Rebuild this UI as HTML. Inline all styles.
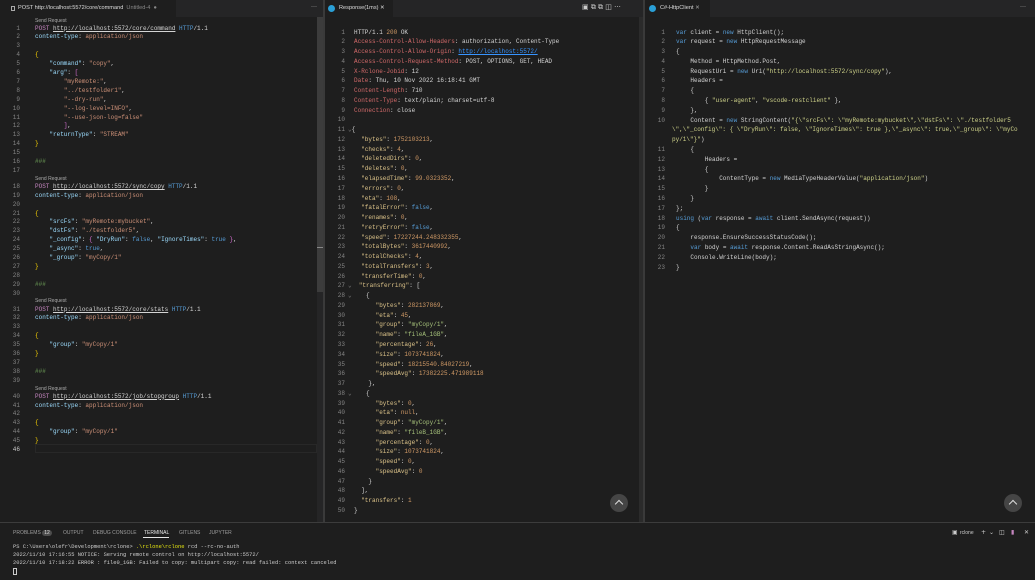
<!DOCTYPE html>
<html><head><meta charset="utf-8"><style>
*{margin:0;padding:0;box-sizing:border-box}
body{width:1035px;height:580px;background:#1e1e1e;overflow:hidden;position:relative;font-family:"Liberation Mono",monospace;font-size:6px;color:#d4d4d4}
.abs{position:absolute}
.tabbar{position:absolute;top:0;height:17px;background:#252526}
.tab{position:absolute;top:0;height:17px;background:#1e1e1e;font-family:"Liberation Sans",sans-serif;font-size:5.6px;color:#ddd;line-height:17px;white-space:nowrap}
.code{position:absolute;white-space:normal}
.code div{position:relative;white-space:pre;overflow:visible}
.L div{height:8.9px}.M div{height:9.78px}.R div{height:9.8px}.T div{height:7.9px}
.ln{position:absolute;left:0;text-align:right;color:#858585;width:20px}
.code div.sr{font-family:"Liberation Sans",sans-serif;font-size:5px;color:#aaa;height:7.1px;line-height:7px;padding-left:35px}
.k{color:#c586c0}.u{text-decoration:underline}.b{color:#569cd6}.h{color:#9cdcfe}.s{color:#ce9178}.y{color:#ffd700}.p{color:#da70d6}.g{color:#6a9955}
.rh{color:#d16969}.rk{color:#dcc389}.rn{color:#d19a66}.rs{color:#a5c07a}.lk{color:#3794ff;text-decoration:underline}
.cs{color:#cfd38a}.cv{color:#569cd6}
.circ{position:absolute;width:18px;height:18px;border-radius:50%;background:#454545}
.circ:after{content:"";position:absolute;left:6px;top:7px;width:5px;height:5px;border-left:1px solid #ddd;border-top:1px solid #ddd;transform:rotate(45deg)}
.pt{position:absolute;top:530px;font-family:"Liberation Sans",sans-serif;font-size:5px;color:#9d9d9d}
.ti{position:absolute;top:529px;font-family:"DejaVu Sans",sans-serif;font-size:6px;color:#ccc}
</style></head><body>
<div class="tabbar" style="left:0;width:323px"></div>
<div class="tabbar" style="left:325px;width:318px"></div>
<div class="tabbar" style="left:645px;width:390px"></div>
<div class="tab" style="left:0;width:176px;padding-left:18px">POST http://localhost:5572/core/command <span style="color:#888">&nbsp;Untitled-4&nbsp; ●</span></div>
<div class="abs" style="left:11px;top:6px;width:4px;height:5px;border:1px solid #aaa"></div>
<div class="abs" style="left:311px;top:4px;color:#ccc;font-family:'Liberation Sans'">···</div>
<div class="tab" style="left:325px;width:68px;padding-left:14px">Response(1ms) <span style="color:#ddd">✕</span></div>
<div class="abs" style="left:328px;top:5px;width:7px;height:7px;border-radius:50%;background:#2a9fd6"></div>
<div class="abs" style="left:582px;top:3px;color:#ccc;font-size:7px;font-family:'DejaVu Sans'">▣ ⧉ ⧉ ◫ ···</div>
<div class="tab" style="left:645px;width:65px;padding-left:15px">C#-HttpClient <span style="color:#aaa">✕</span></div>
<div class="abs" style="left:649px;top:5px;width:7px;height:7px;border-radius:50%;background:#2a9fd6"></div>
<div class="abs" style="left:1020px;top:4px;color:#ccc;font-family:'Liberation Sans'">···</div>

<div class="abs" style="left:323px;top:0;width:2px;height:522px;background:#3a3a3a"></div>
<div class="abs" style="left:643px;top:0;width:2px;height:522px;background:#3a3a3a"></div>
<div class="abs" style="left:317px;top:17px;width:6px;height:505px;background:#252526"></div>
<div class="abs" style="left:317px;top:17px;width:6px;height:275px;background:#3c3c3c"></div>
<div class="abs" style="left:317px;top:247px;width:6px;height:1px;background:#888"></div>
<div class="abs" style="left:639px;top:17px;width:4px;height:505px;background:#2b2b2b"></div>
<div class="abs" style="left:35px;top:444px;width:282px;height:9px;border:1px solid #282828"></div>

<!-- LEFT -->
<div class="code L" style="left:0;top:17.5px;line-height:8.9px">
<div class="sr">Send Request</div>
<div><span class="ln">1</span><span style="padding-left:35px"><span class="k">POST</span> <span class="u">http://localhost:5572/core/command</span> <span class="b">HTTP</span>/1.1</span></div>
<div><span class="ln">2</span><span style="padding-left:35px"><span class="h">content-type</span>: <span class="s">application/json</span></span></div>
<div><span class="ln">3</span> </div>
<div><span class="ln">4</span><span style="padding-left:35px" class="y">{</span></div>
<div><span class="ln">5</span><span style="padding-left:35px">    <span class="h">"command"</span>: <span class="s">"copy"</span>,</span></div>
<div><span class="ln">6</span><span style="padding-left:35px">    <span class="h">"arg"</span>: <span class="p">[</span></span></div>
<div><span class="ln">7</span><span style="padding-left:35px">        <span class="s">"myRemote:"</span>,</span></div>
<div><span class="ln">8</span><span style="padding-left:35px">        <span class="s">"../testfolder1"</span>,</span></div>
<div><span class="ln">9</span><span style="padding-left:35px">        <span class="s">"--dry-run"</span>,</span></div>
<div><span class="ln">10</span><span style="padding-left:35px">        <span class="s">"--log-level=INFO"</span>,</span></div>
<div><span class="ln">11</span><span style="padding-left:35px">        <span class="s">"--use-json-log=false"</span></span></div>
<div><span class="ln">12</span><span style="padding-left:35px">        <span class="p">]</span>,</span></div>
<div><span class="ln">13</span><span style="padding-left:35px">    <span class="h">"returnType"</span>: <span class="s">"STREAM"</span></span></div>
<div><span class="ln">14</span><span style="padding-left:35px" class="y">}</span></div>
<div><span class="ln">15</span> </div>
<div><span class="ln">16</span><span style="padding-left:35px" class="g">###</span></div>
<div><span class="ln">17</span> </div>
<div class="sr">Send Request</div>
<div><span class="ln">18</span><span style="padding-left:35px"><span class="k">POST</span> <span class="u">http://localhost:5572/sync/copy</span> <span class="b">HTTP</span>/1.1</span></div>
<div><span class="ln">19</span><span style="padding-left:35px"><span class="h">content-type</span>: <span class="s">application/json</span></span></div>
<div><span class="ln">20</span> </div>
<div><span class="ln">21</span><span style="padding-left:35px" class="y">{</span></div>
<div><span class="ln">22</span><span style="padding-left:35px">    <span class="h">"srcFs"</span>: <span class="s">"myRemote:mybucket"</span>,</span></div>
<div><span class="ln">23</span><span style="padding-left:35px">    <span class="h">"dstFs"</span>: <span class="s">"./testfolder5"</span>,</span></div>
<div><span class="ln">24</span><span style="padding-left:35px">    <span class="h">"_config"</span>: <span class="p">{</span> <span class="h">"DryRun"</span>: <span class="b">false</span>, <span class="h">"IgnoreTimes"</span>: <span class="b">true</span> <span class="p">}</span>,</span></div>
<div><span class="ln">25</span><span style="padding-left:35px">    <span class="h">"_async"</span>: <span class="b">true</span>,</span></div>
<div><span class="ln">26</span><span style="padding-left:35px">    <span class="h">"_group"</span>: <span class="s">"myCopy/1"</span></span></div>
<div><span class="ln">27</span><span style="padding-left:35px" class="y">}</span></div>
<div><span class="ln">28</span> </div>
<div><span class="ln">29</span><span style="padding-left:35px" class="g">###</span></div>
<div><span class="ln">30</span> </div>
<div class="sr">Send Request</div>
<div><span class="ln">31</span><span style="padding-left:35px"><span class="k">POST</span> <span class="u">http://localhost:5572/core/stats</span> <span class="b">HTTP</span>/1.1</span></div>
<div><span class="ln">32</span><span style="padding-left:35px"><span class="h">content-type</span>: <span class="s">application/json</span></span></div>
<div><span class="ln">33</span> </div>
<div><span class="ln">34</span><span style="padding-left:35px" class="y">{</span></div>
<div><span class="ln">35</span><span style="padding-left:35px">    <span class="h">"group"</span>: <span class="s">"myCopy/1"</span></span></div>
<div><span class="ln">36</span><span style="padding-left:35px" class="y">}</span></div>
<div><span class="ln">37</span> </div>
<div><span class="ln">38</span><span style="padding-left:35px" class="g">###</span></div>
<div><span class="ln">39</span> </div>
<div class="sr">Send Request</div>
<div><span class="ln">40</span><span style="padding-left:35px"><span class="k">POST</span> <span class="u">http://localhost:5572/job/stopgroup</span> <span class="b">HTTP</span>/1.1</span></div>
<div><span class="ln">41</span><span style="padding-left:35px"><span class="h">content-type</span>: <span class="s">application/json</span></span></div>
<div><span class="ln">42</span> </div>
<div><span class="ln">43</span><span style="padding-left:35px" class="y">{</span></div>
<div><span class="ln">44</span><span style="padding-left:35px">    <span class="h">"group"</span>: <span class="s">"myCopy/1"</span></span></div>
<div><span class="ln">45</span><span style="padding-left:35px" class="y">}</span></div>
<div><span class="ln" style="color:#ccc">46</span> </div>
</div>

<!-- MIDDLE -->
<div class="code M" style="left:325px;top:27.5px;line-height:9.78px">
<div><span class="ln">1</span><span style="padding-left:29px">HTTP/1.1 <span class="rn">200</span> OK</span></div>
<div><span class="ln">2</span><span style="padding-left:29px"><span class="rh">Access-Control-Allow-Headers</span>: authorization, Content-Type</span></div>
<div><span class="ln">3</span><span style="padding-left:29px"><span class="rh">Access-Control-Allow-Origin</span>: <span class="lk">http://localhost:5572/</span></span></div>
<div><span class="ln">4</span><span style="padding-left:29px"><span class="rh">Access-Control-Request-Method</span>: POST, OPTIONS, GET, HEAD</span></div>
<div><span class="ln">5</span><span style="padding-left:29px"><span class="rh">X-Rclone-Jobid</span>: 12</span></div>
<div><span class="ln">6</span><span style="padding-left:29px"><span class="rh">Date</span>: Thu, 10 Nov 2022 16:18:41 GMT</span></div>
<div><span class="ln">7</span><span style="padding-left:29px"><span class="rh">Content-Length</span>: 710</span></div>
<div><span class="ln">8</span><span style="padding-left:29px"><span class="rh">Content-Type</span>: text/plain; charset=utf-8</span></div>
<div><span class="ln">9</span><span style="padding-left:29px"><span class="rh">Connection</span>: close</span></div>
<div><span class="ln">10</span> </div>
<div><span class="ln">11</span><span style="padding-left:23px;color:#888">⌄<span style="color:#d4d4d4">{</span></span></div>
<div><span class="ln">12</span><span style="padding-left:29px">  <span class="rk">"bytes"</span>: <span class="rn">1752103213</span>,</span></div>
<div><span class="ln">13</span><span style="padding-left:29px">  <span class="rk">"checks"</span>: <span class="rn">4</span>,</span></div>
<div><span class="ln">14</span><span style="padding-left:29px">  <span class="rk">"deletedDirs"</span>: <span class="rn">0</span>,</span></div>
<div><span class="ln">15</span><span style="padding-left:29px">  <span class="rk">"deletes"</span>: <span class="rn">0</span>,</span></div>
<div><span class="ln">16</span><span style="padding-left:29px">  <span class="rk">"elapsedTime"</span>: <span class="rn">99.0323352</span>,</span></div>
<div><span class="ln">17</span><span style="padding-left:29px">  <span class="rk">"errors"</span>: <span class="rn">0</span>,</span></div>
<div><span class="ln">18</span><span style="padding-left:29px">  <span class="rk">"eta"</span>: <span class="rn">108</span>,</span></div>
<div><span class="ln">19</span><span style="padding-left:29px">  <span class="rk">"fatalError"</span>: <span class="b">false</span>,</span></div>
<div><span class="ln">20</span><span style="padding-left:29px">  <span class="rk">"renames"</span>: <span class="rn">0</span>,</span></div>
<div><span class="ln">21</span><span style="padding-left:29px">  <span class="rk">"retryError"</span>: <span class="b">false</span>,</span></div>
<div><span class="ln">22</span><span style="padding-left:29px">  <span class="rk">"speed"</span>: <span class="rn">17227244.248332355</span>,</span></div>
<div><span class="ln">23</span><span style="padding-left:29px">  <span class="rk">"totalBytes"</span>: <span class="rn">3617440992</span>,</span></div>
<div><span class="ln">24</span><span style="padding-left:29px">  <span class="rk">"totalChecks"</span>: <span class="rn">4</span>,</span></div>
<div><span class="ln">25</span><span style="padding-left:29px">  <span class="rk">"totalTransfers"</span>: <span class="rn">3</span>,</span></div>
<div><span class="ln">26</span><span style="padding-left:29px">  <span class="rk">"transferTime"</span>: <span class="rn">0</span>,</span></div>
<div><span class="ln">27</span><span style="padding-left:23px"><span style="color:#888">⌄</span>  <span class="rk">"transferring"</span>: [</span></div>
<div><span class="ln">28</span><span style="padding-left:23px"><span style="color:#888">⌄</span>    {</span></div>
<div><span class="ln">29</span><span style="padding-left:29px">      <span class="rk">"bytes"</span>: <span class="rn">282137869</span>,</span></div>
<div><span class="ln">30</span><span style="padding-left:29px">      <span class="rk">"eta"</span>: <span class="rn">45</span>,</span></div>
<div><span class="ln">31</span><span style="padding-left:29px">      <span class="rk">"group"</span>: <span class="rs">"myCopy/1"</span>,</span></div>
<div><span class="ln">32</span><span style="padding-left:29px">      <span class="rk">"name"</span>: <span class="rs">"fileA_1GB"</span>,</span></div>
<div><span class="ln">33</span><span style="padding-left:29px">      <span class="rk">"percentage"</span>: <span class="rn">26</span>,</span></div>
<div><span class="ln">34</span><span style="padding-left:29px">      <span class="rk">"size"</span>: <span class="rn">1073741824</span>,</span></div>
<div><span class="ln">35</span><span style="padding-left:29px">      <span class="rk">"speed"</span>: <span class="rn">18215540.84027219</span>,</span></div>
<div><span class="ln">36</span><span style="padding-left:29px">      <span class="rk">"speedAvg"</span>: <span class="rn">17382225.471989118</span></span></div>
<div><span class="ln">37</span><span style="padding-left:29px">    },</span></div>
<div><span class="ln">38</span><span style="padding-left:23px"><span style="color:#888">⌄</span>    {</span></div>
<div><span class="ln">39</span><span style="padding-left:29px">      <span class="rk">"bytes"</span>: <span class="rn">0</span>,</span></div>
<div><span class="ln">40</span><span style="padding-left:29px">      <span class="rk">"eta"</span>: <span class="rn">null</span>,</span></div>
<div><span class="ln">41</span><span style="padding-left:29px">      <span class="rk">"group"</span>: <span class="rs">"myCopy/1"</span>,</span></div>
<div><span class="ln">42</span><span style="padding-left:29px">      <span class="rk">"name"</span>: <span class="rs">"fileB_1GB"</span>,</span></div>
<div><span class="ln">43</span><span style="padding-left:29px">      <span class="rk">"percentage"</span>: <span class="rn">0</span>,</span></div>
<div><span class="ln">44</span><span style="padding-left:29px">      <span class="rk">"size"</span>: <span class="rn">1073741824</span>,</span></div>
<div><span class="ln">45</span><span style="padding-left:29px">      <span class="rk">"speed"</span>: <span class="rn">0</span>,</span></div>
<div><span class="ln">46</span><span style="padding-left:29px">      <span class="rk">"speedAvg"</span>: <span class="rn">0</span></span></div>
<div><span class="ln">47</span><span style="padding-left:29px">    }</span></div>
<div><span class="ln">48</span><span style="padding-left:29px">  ],</span></div>
<div><span class="ln">49</span><span style="padding-left:29px">  <span class="rk">"transfers"</span>: <span class="rn">1</span></span></div>
<div><span class="ln">50</span><span style="padding-left:29px">}</span></div>
</div>
<div class="circ" style="left:610px;top:494px"></div>

<!-- RIGHT -->
<div class="code R" style="left:645px;top:27.5px;line-height:9.8px">
<div><span class="ln">1</span><span style="padding-left:31px"><span class="cv">var</span> client = <span class="cv">new</span> HttpClient();</span></div>
<div><span class="ln">2</span><span style="padding-left:31px"><span class="cv">var</span> request = <span class="cv">new</span> HttpRequestMessage</span></div>
<div><span class="ln">3</span><span style="padding-left:31px">{</span></div>
<div><span class="ln">4</span><span style="padding-left:31px">    Method = HttpMethod.Post,</span></div>
<div><span class="ln">5</span><span style="padding-left:31px">    RequestUri = <span class="cv">new</span> Uri(<span class="cs">"http://localhost:5572/sync/copy"</span>),</span></div>
<div><span class="ln">6</span><span style="padding-left:31px">    Headers =</span></div>
<div><span class="ln">7</span><span style="padding-left:31px">    {</span></div>
<div><span class="ln">8</span><span style="padding-left:31px">        { <span class="cs">"user-agent"</span>, <span class="cs">"vscode-restclient"</span> },</span></div>
<div><span class="ln">9</span><span style="padding-left:31px">    },</span></div>
<div><span class="ln">10</span><span style="padding-left:31px">    Content = <span class="cv">new</span> StringContent(<span class="cs">"{\"srcFs\": \"myRemote:mybucket\",\"dstFs\": \"./testfolder5</span></span></div>
<div><span style="padding-left:27px" class="cs">\",\"_config\": { \"DryRun\": false, \"IgnoreTimes\": true },\"_async\": true,\"_group\": \"myCo</span></div>
<div><span style="padding-left:27px"><span class="cs">py/1\"}"</span>)</span></div>
<div><span class="ln">11</span><span style="padding-left:31px">    {</span></div>
<div><span class="ln">12</span><span style="padding-left:31px">        Headers =</span></div>
<div><span class="ln">13</span><span style="padding-left:31px">        {</span></div>
<div><span class="ln">14</span><span style="padding-left:31px">            ContentType = <span class="cv">new</span> MediaTypeHeaderValue(<span class="cs">"application/json"</span>)</span></div>
<div><span class="ln">15</span><span style="padding-left:31px">        }</span></div>
<div><span class="ln">16</span><span style="padding-left:31px">    }</span></div>
<div><span class="ln">17</span><span style="padding-left:31px">};</span></div>
<div><span class="ln">18</span><span style="padding-left:31px"><span class="cv">using</span> (<span class="cv">var</span> response = <span class="cv">await</span> client.SendAsync(request))</span></div>
<div><span class="ln">19</span><span style="padding-left:31px">{</span></div>
<div><span class="ln">20</span><span style="padding-left:31px">    response.EnsureSuccessStatusCode();</span></div>
<div><span class="ln">21</span><span style="padding-left:31px">    <span class="cv">var</span> body = <span class="cv">await</span> response.Content.ReadAsStringAsync();</span></div>
<div><span class="ln">22</span><span style="padding-left:31px">    Console.WriteLine(body);</span></div>
<div><span class="ln">23</span><span style="padding-left:31px">}</span></div>
</div>
<div class="circ" style="left:1004px;top:494px"></div>

<!-- PANEL -->
<div class="abs" style="left:0;top:522px;width:1035px;height:1px;background:#3c3c3c"></div>
<div class="pt" style="left:13px">PROBLEMS <span style="display:inline-block;background:#4d4d4d;color:#ddd;border-radius:5px;padding:0 2px;font-size:5px">12</span></div>
<div class="pt" style="left:63px">OUTPUT</div>
<div class="pt" style="left:93px">DEBUG CONSOLE</div>
<div class="pt" style="left:144px;color:#e7e7e7">TERMINAL</div>
<div class="abs" style="left:143px;top:537px;width:26px;height:1px;background:#e7e7e7"></div>
<div class="pt" style="left:179px">GITLENS</div>
<div class="pt" style="left:209px">JUPYTER</div>
<div class="ti" style="left:952px">▣</div>
<div class="ti" style="left:960px;font-family:'Liberation Sans';font-size:5px;top:530px">rclone</div>
<div class="ti" style="left:981px">+</div>
<div class="ti" style="left:989px">⌄</div>
<div class="ti" style="left:999px">◫</div>
<div class="ti" style="left:1011px;color:#c586c0">▮</div>
<div class="ti" style="left:1024px">✕</div>
<div class="code T" style="left:13px;top:544px;font-size:5.4px;line-height:7.9px;color:#ccc">
<div>PS C:\Users\olefr\Development\rclone&gt; <span style="color:#e5e510">.\rclone\rclone</span> rcd --rc-no-auth</div>
<div>2022/11/10 17:16:55 NOTICE: Serving remote control on http://localhost:5572/</div>
<div>2022/11/10 17:18:22 ERROR : file0_1GB: Failed to copy: multipart copy: read failed: context canceled</div>
<div><span style="display:inline-block;width:4px;height:7px;border:1px solid #ccc"></span></div>
</div>
</body></html>
